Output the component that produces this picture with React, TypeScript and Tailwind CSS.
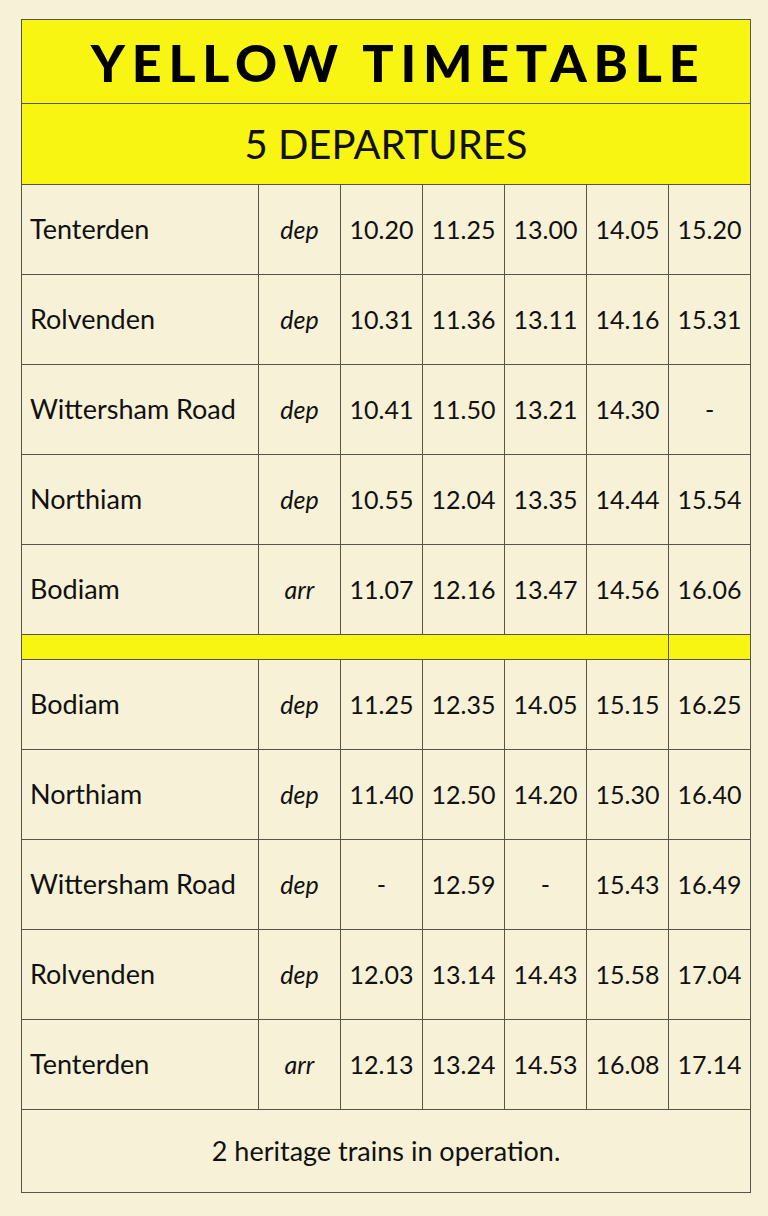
const outbound = [
  { station: "Tenterden", kind: "dep", times: ["10.20", "11.25", "13.00", "14.05", "15.20"] },
  { station: "Rolvenden", kind: "dep", times: ["10.31", "11.36", "13.11", "14.16", "15.31"] },
  { station: "Wittersham Road", kind: "dep", times: ["10.41", "11.50", "13.21", "14.30", "-"] },
  { station: "Northiam", kind: "dep", times: ["10.55", "12.04", "13.35", "14.44", "15.54"] },
  { station: "Bodiam", kind: "arr", times: ["11.07", "12.16", "13.47", "14.56", "16.06"] },
];

const inbound = [
  { station: "Bodiam", kind: "dep", times: ["11.25", "12.35", "14.05", "15.15", "16.25"] },
  { station: "Northiam", kind: "dep", times: ["11.40", "12.50", "14.20", "15.30", "16.40"] },
  { station: "Wittersham Road", kind: "dep", times: ["-", "12.59", "-", "15.43", "16.49"] },
  { station: "Rolvenden", kind: "dep", times: ["12.03", "13.14", "14.43", "15.58", "17.04"] },
  { station: "Tenterden", kind: "arr", times: ["12.13", "13.24", "14.53", "16.08", "17.14"] },
];

function Row({ station, kind, times }: { station: string; kind: string; times: string[] }) {
  return (
    <tr className="h-[90px]">
      <td className="border border-[#57544a] pl-[8px] text-left text-[27px]">{station}</td>
      <td className="border border-[#57544a] text-center italic">{kind}</td>
      {times.map((t, i) => (
        <td key={i} className="border border-[#57544a] text-center">
          {t}
        </td>
      ))}
    </tr>
  );
}

export default function App() {
  return (
    <div
      className="w-[768px] h-[1216px] bg-[#f7f2d7] pt-[19px] pl-[21px] text-[#111] text-[25px]"
      style={{ fontFamily: "Lato, 'Open Sans', sans-serif" }}
    >
      <table className="border-collapse table-fixed w-[729px]">
        <colgroup>
          <col className="w-[237px]" />
          <col className="w-[82px]" />
          <col className="w-[82px]" />
          <col className="w-[82px]" />
          <col className="w-[82px]" />
          <col className="w-[82px]" />
          <col className="w-[82px]" />
        </colgroup>
        <tbody>
          {/* Title */}
          <tr className="h-[84px]">
            <td
              colSpan={7}
              className="border border-[#57544a] bg-[#f8f512] text-center text-[52px] font-black tracking-[0.13em] leading-none text-black"
            >
              <span className="pl-[24px]">YELLOW TIMETABLE</span>
            </td>
          </tr>
          <tr className="h-[81px]">
            <td colSpan={7} className="border border-[#57544a] bg-[#f8f512] text-center text-[40px] leading-none">
              5 DEPARTURES
            </td>
          </tr>

          {outbound.map((r, i) => (
            <Row key={"o" + i} {...r} />
          ))}

          {/* Separator */}
          <tr className="h-[25px]">
            <td colSpan={6} className="border border-[#57544a] bg-[#f8f512]"></td>
            <td className="border border-[#57544a] bg-[#f8f512]"></td>
          </tr>

          {inbound.map((r, i) => (
            <Row key={"i" + i} {...r} />
          ))}

          {/* Footer */}
          <tr className="h-[83px]">
            <td colSpan={7} className="border border-[#57544a] text-center text-[27px]">
              2 heritage trains in operation.
            </td>
          </tr>
        </tbody>
      </table>
    </div>
  );
}
